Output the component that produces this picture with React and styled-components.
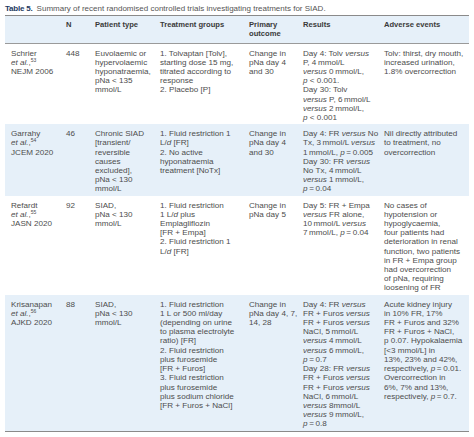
import styled, { createGlobalStyle } from 'styled-components';

const GlobalStyle = createGlobalStyle`
  body {
    margin: 0;
    background: #fff;
    font-family: "Liberation Sans", Arial, sans-serif;
  }
`;

const Page = styled.div`
  padding: 0 5px;
  width: 464px;
`;

const Caption = styled.div`
  box-sizing: border-box;
  height: 15px;
  padding-top: 3px;
  font-size: 8px;
  line-height: 11px;
  color: #555;
  white-space: nowrap;
`;

const CaptionLabel = styled.span`
  font-weight: 700;
  color: #1e3a5f;
  letter-spacing: -0.2px;
  margin-right: 4px;
`;

const Table = styled.table`
  width: 464px;
  border-collapse: collapse;
  table-layout: fixed;
  border-top: 1.5px solid #8a8a8a;
  border-bottom: 1.5px solid #8a8a8a;
`;

const Col = styled.col`
  width: ${(p) => p.$w}px;
`;

const HeadRow = styled.tr`
  background: #e6f0f9;
  border-bottom: 1px solid #9a9a9a;
`;

const Th = styled.th`
  text-align: left;
  vertical-align: top;
  font-size: 7.6px;
  line-height: 9.3px;
  font-weight: 700;
  color: #3a3a3a;
  padding: 4px 0 4px 6px;
  white-space: nowrap;
`;

const Row = styled.tr`
  background: ${(p) => (p.$shade ? '#e6f0f9' : '#fff')};
`;

const Td = styled.td`
  vertical-align: top;
  font-size: 8.1px;
  line-height: 9.2px;
  color: #4d4d4d;
  padding: 5px 0 2px 6px;
  white-space: nowrap;
`;

const Line = styled.span`
  display: block;
`;

const Em = styled.i`
  font-style: italic;
`;

const Ref = styled.sup`
  font-size: 5px;
  line-height: 0;
  vertical-align: 3px;
`;

const t = '\u2009';
const mm = (n) => `${n}${t}mmol/L`;
const vs = <Em>versus</Em>;
const p = <Em>p</Em>;

const Cell = ({ lines }) => (
  <Td>
    {lines.map((l, i) => (
      <Line key={i}>{l}</Line>
    ))}
  </Td>
);

const study = (name, ref, journal) => [
  name,
  <>
    <Em>et al.</Em>,<Ref>{ref}</Ref>
  </>,
  journal,
];

const rows = [
  {
    study: study('Schrier', 53, 'NEJM 2006'),
    n: '448',
    patient: ['Euvolaemic or', 'hypervolaemic', 'hyponatraemia,', 'pNa < 135', 'mmol/L'],
    treatment: [
      '1. Tolvaptan [Tolv],',
      'starting dose 15 mg,',
      'titrated according to',
      'response',
      '2. Placebo [P]',
    ],
    outcome: ['Change in', 'pNa day 4', 'and 30'],
    results: [
      <>Day 4: Tolv {vs}</>,
      <>P, {mm(4)}</>,
      <>{vs} {mm(0)},</>,
      <>{p} &lt; 0.001.</>,
      'Day 30: Tolv',
      <>{vs} P, {mm(6)}</>,
      <>{vs} {mm(2)},</>,
      <>{p} &lt; 0.001</>,
    ],
    adverse: ['Tolv: thirst, dry mouth,', 'increased urination,', '1.8% overcorrection'],
  },
  {
    shade: true,
    study: study('Garrahy', 54, 'JCEM 2020'),
    n: '46',
    patient: ['Chronic SIAD', '[transient/', 'reversible', 'causes', 'excluded],', 'pNa < 130', 'mmol/L'],
    treatment: [
      '1. Fluid restriction 1',
      <>L/<Em>d</Em> [FR]</>,
      '2. No active',
      'hyponatraemia',
      'treatment [NoTx]',
    ],
    outcome: ['Change in', 'pNa day 4', 'and 30'],
    results: [
      <>Day 4: FR {vs} No</>,
      <>Tx, {mm(3)} {vs}</>,
      <>{mm(1)}, {p}{t}={t}0.005</>,
      <>Day 30: FR {vs}</>,
      <>No Tx, {mm(4)}</>,
      <>{vs} {mm(1)},</>,
      <>{p}{t}={t}0.04</>,
    ],
    adverse: ['Nil directly attributed', 'to treatment, no', 'overcorrection'],
  },
  {
    study: study('Refardt', 55, 'JASN 2020'),
    n: '92',
    patient: ['SIAD,', 'pNa < 130', 'mmol/L'],
    treatment: [
      '1. Fluid restriction',
      <>1 L/<Em>d</Em> plus</>,
      'Emplagliflozin',
      '[FR + Empa]',
      '2. Fluid restriction 1',
      <>L/<Em>d</Em> [FR]</>,
    ],
    outcome: ['Change in', 'pNa day 5'],
    results: [
      'Day 5: FR + Empa',
      <>{vs} FR alone,</>,
      <>{mm(10)} {vs}</>,
      <>{mm(7)}, {p}{t}={t}0.04</>,
    ],
    adverse: [
      'No cases of',
      'hypotension or',
      'hypoglycaemia,',
      'four patients had',
      'deterioration in renal',
      'function, two patients',
      'in FR + Empa group',
      'had overcorrection',
      'of pNa, requiring',
      'loosening of FR',
    ],
  },
  {
    shade: true,
    study: study('Krisanapan', 56, 'AJKD 2020'),
    n: '88',
    patient: ['SIAD,', 'pNa < 130', 'mmol/L'],
    treatment: [
      '1. Fluid restriction',
      '1 L or 500 ml/day',
      '(depending on urine',
      'to plasma electrolyte',
      'ratio) [FR]',
      '2. Fluid restriction',
      'plus furosemide',
      '[FR + Furos]',
      '3. Fluid restriction',
      'plus furosemide',
      'plus sodium chloride',
      '[FR + Furos + NaCl]',
    ],
    outcome: ['Change in', 'pNa day 4, 7,', '14, 28'],
    results: [
      <>Day 4: FR {vs}</>,
      <>FR + Furos {vs}</>,
      <>FR + Furos {vs}</>,
      <>NaCl, {mm(5)}</>,
      <>{vs} {mm(4)}</>,
      <>{vs} {mm(6)},</>,
      <>{p}{t}={t}0.7</>,
      <>Day 28: FR {vs}</>,
      <>FR + Furos {vs}</>,
      <>FR + Furos {vs}</>,
      <>NaCl, {mm(6)}</>,
      <>{vs} 8mmol/L</>,
      <>{vs} {mm(9)},</>,
      <>{p}{t}={t}0.8</>,
    ],
    adverse: [
      'Acute kidney injury',
      'in 10% FR, 17%',
      'FR + Furos and 32%',
      'FR + Furos + NaCl,',
      'p 0.07. Hypokalaemia',
      '[<3 mmol/L] in',
      '13%, 23% and 42%,',
      <>respectively, {p}{t}={t}0.01.</>,
      'Overcorrection in',
      '6%, 7% and 13%,',
      <>respectively, {p}{t}={t}0.7.</>,
    ],
  },
];

const widths = [55, 29, 65, 89, 54, 81, 91];

export default function App() {
  return (
    <Page>
      <GlobalStyle />
      <Caption>
        <CaptionLabel>Table 5.</CaptionLabel>
        Summary of recent randomised controlled trials investigating treatments for SIAD.
      </Caption>
      <Table>
        <colgroup>
          {widths.map((w, i) => (
            <Col key={i} $w={w} />
          ))}
        </colgroup>
        <thead>
          <HeadRow>
            <Th />
            <Th>N</Th>
            <Th>Patient type</Th>
            <Th>Treatment groups</Th>
            <Th>
              Primary
              <br />
              outcome
            </Th>
            <Th>Results</Th>
            <Th>Adverse events</Th>
          </HeadRow>
        </thead>
        <tbody>
          {rows.map((r, i) => (
            <Row key={i} $shade={r.shade}>
              <Cell lines={r.study} />
              <Cell lines={[r.n]} />
              <Cell lines={r.patient} />
              <Cell lines={r.treatment} />
              <Cell lines={r.outcome} />
              <Cell lines={r.results} />
              <Cell lines={r.adverse} />
            </Row>
          ))}
        </tbody>
      </Table>
    </Page>
  );
}
